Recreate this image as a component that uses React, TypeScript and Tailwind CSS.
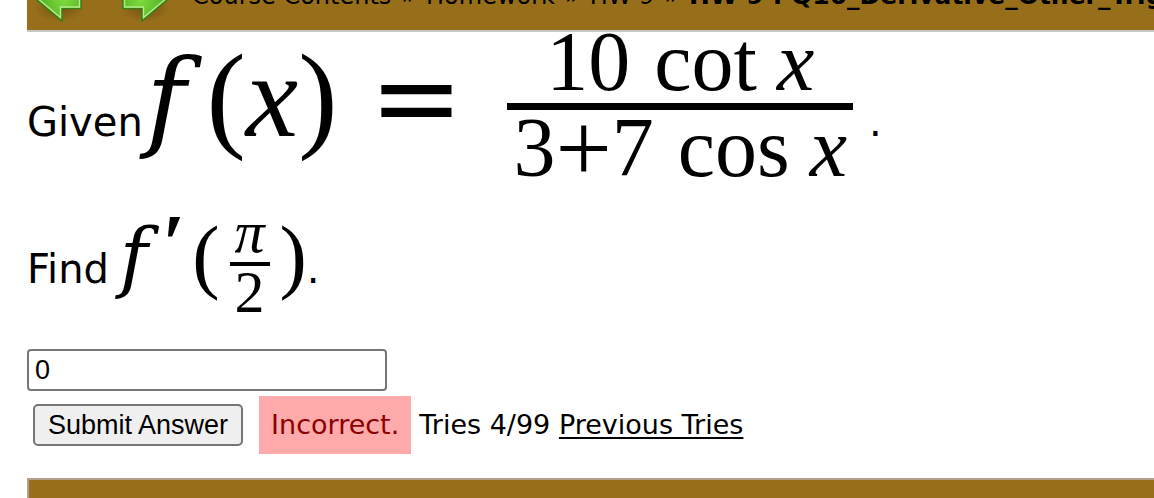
import { useState } from "react";

const serif = "font-['Liberation_Serif',serif]";
const math = "font-['DejaVu_Math_TeX_Gyre','Liberation_Serif',serif]";

function ArrowIcon({ id, flip = false }: { id: string; flip?: boolean }) {
  return (
    <svg
      viewBox="0 0 56 56"
      className={flip ? "size-14 shrink-0 -scale-x-100" : "size-14 shrink-0"}
      aria-hidden="true"
    >
      <defs>
        <radialGradient id={id} cx="0.65" cy="0.6" r="0.6">
          <stop offset="0" stopColor="#7ddb3c" />
          <stop offset="1" stopColor="#4ba621" />
        </radialGradient>
        <radialGradient id={id + "-shade"}>
          <stop offset="0" stopColor="#5c3d0a" stopOpacity="0.6" />
          <stop offset="1" stopColor="#5c3d0a" stopOpacity="0" />
        </radialGradient>
      </defs>
      <ellipse cx="31" cy="40" rx="25" ry="14" fill={`url(#${id}-shade)`} />
      <path
        d="M3 27 L34 1 V14 H53 V40.5 H34 V53 Z"
        fill={`url(#${id})`}
        stroke="#3a7d17"
        strokeWidth="1.6"
      />
      <path
        d="M5.500 27 L32.500 4.500 V15.500 H51.500 V39 H32.500 V49.500 Z"
        fill="none"
        stroke="#b4ec8c"
        strokeWidth="1.4"
      />
    </svg>
  );
}

function Separator() {
  return <span className="mx-[10px]">»</span>;
}

export default function App() {
  const [answer, setAnswer] = useState("0");

  return (
    <div className="bg-white pl-[27px] font-['DejaVu_Sans',sans-serif] text-black overflow-hidden">
      {/* Breadcrumb bar */}
      <header className="flex h-8 items-end overflow-hidden border-b-2 border-[#c8c8c4] bg-[#976f1b]">
        <nav className="flex items-end whitespace-nowrap text-2xl leading-8">
          <div className="flex gap-9 pb-[6px] pl-px">
            <a href="#prev" aria-label="Previous">
              <ArrowIcon id="prev-arrow" />
            </a>
            <a href="#next" aria-label="Next">
              <ArrowIcon id="next-arrow" flip />
            </a>
          </div>
          <div className="pb-[18px] pl-4">
            <a href="#contents">Course Contents</a>
            <Separator />
            <a href="#homework">Homework</a>
            <Separator />
            <a href="#hw9">HW 9</a>
            <Separator />
            <b className="text-[25px]">HW 9 : Q10_Derivative_Other_Trig</b>
          </div>
        </nav>
      </header>

      <main>
        {/* Problem statement */}
        <p className={`${serif} whitespace-nowrap text-[118px] leading-none`}>
          <span className="font-['DejaVu_Sans',sans-serif] text-[40px]">Given</span>
          <span className={`${math} -ml-3 -mr-1 text-[108px] leading-[0]`}>𝑓</span>
          <span>(</span>
          <i>x</i>
          <span>)</span>
          <span className="ml-8 mr-11 font-['DejaVu_Sans',sans-serif] text-[112px] leading-none">=</span>
          <span className="mb-2 inline-block text-center align-middle text-[84px] leading-[60px]">
            <span className="block pb-[11px]">
              10<span className="ml-6 mr-5">cot</span>
              <i>x</i>
            </span>
            <span className="block border-t-[7px] border-black px-[6px] pt-2">
              3<span className="align-[-6px] text-[100px] leading-[0]">+</span>7
              <span className="ml-6 mr-5">cos</span>
              <i>x</i>
            </span>
          </span>
          <span className="ml-4 font-['DejaVu_Sans',sans-serif] text-[40px]">.</span>
        </p>

        <p className={`${serif} mt-[22px] whitespace-nowrap text-[82px] leading-none`}>
          <span className="font-['DejaVu_Sans',sans-serif] text-[40px]">Find</span>
          <span className={`${math} -mr-1 text-[76px] leading-[0]`}>𝑓</span>
          <i className="mr-2 align-[12px] font-bold leading-[0]">′</i>
          <span>(</span>
          <span className="mx-[10px] mb-1 inline-block w-10 text-center align-middle text-[60px] leading-[48px]">
            <i className="block pb-[6px]">π</i>
            <span className="block border-t-4 border-black pt-[2px]">2</span>
          </span>
          <span>)</span>
          <span className="font-['DejaVu_Sans',sans-serif] text-[40px]">.</span>
        </p>

        {/* Answer form */}
        <form className="mt-[29px]" onSubmit={(e) => e.preventDefault()}>
          <input
            type="text"
            aria-label="Answer"
            value={answer}
            onChange={(e) => setAnswer(e.target.value)}
            className="block h-[42px] w-[360px] rounded-[4px] border-2 border-[#767676] bg-white px-[6px] font-['Liberation_Sans',sans-serif] text-[27px]"
          />
          <div className="mt-[5px] flex items-center whitespace-nowrap text-[27px]">
            <button
              type="submit"
              className="ml-[6px] mr-4 h-[42px] rounded-[5px] border-2 border-[#767676] bg-[#efefef] px-[13px] font-['Liberation_Sans',sans-serif] leading-none"
            >
              Submit Answer
            </button>
            <span className="bg-[#ffaaaa] px-3 leading-[58px] text-[#8b0000]">Incorrect.</span>
            <span className="ml-2">
              Tries 4/99{" "}
              <a href="#tries" className="underline decoration-2 underline-offset-[3px]">
                Previous Tries
              </a>
            </span>
          </div>
        </form>
      </main>

      <footer className="mt-6 h-5 border-l-2 border-t-2 border-[#b4a08c] bg-[#976f1b]" />
    </div>
  );
}
